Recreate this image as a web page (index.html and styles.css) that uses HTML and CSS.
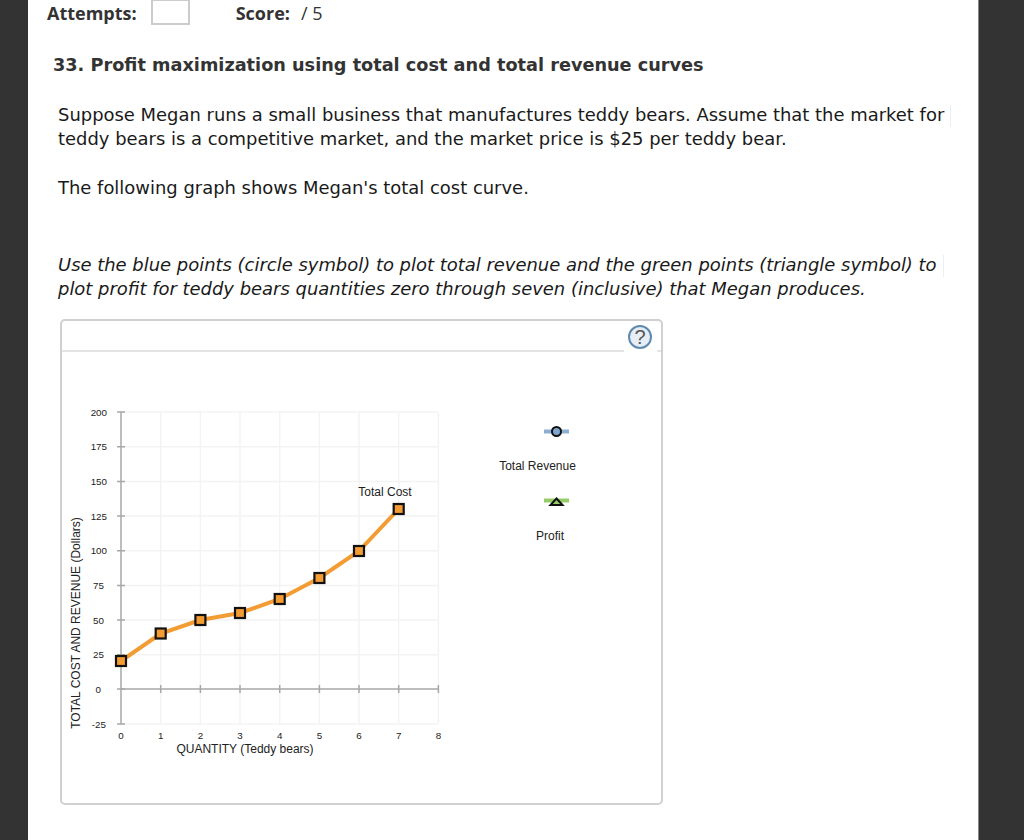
FILE: index.html
```html
<!DOCTYPE html>
<html lang="en">
<head>
<meta charset="utf-8">
<title>Profit maximization</title>
<link rel="stylesheet" href="styles.css">
</head>
<body>
<main class="page">
  <div class="attempts">
    <span class="label">Attempts:</span>
    <span class="box"></span>
    <span class="label score">Score:</span>
    <span class="points">/ 5</span>
  </div>
  <h1 class="title">33. Profit maximization using total cost and total revenue curves</h1>
  <p class="para first">Suppose Megan runs a small business that manufactures teddy bears. Assume that the market for<span class="caret"></span><br>teddy bears is a competitive market, and the market price is $25 per teddy bear.</p>
  <p class="para single">The following graph shows Megan's total cost curve.</p>
  <p class="para instr">Use the blue points (circle symbol) to plot total revenue and the green points (triangle symbol) to<span class="caret"></span><br>plot profit for teddy bears quantities zero through seven (inclusive) that Megan produces.</p>
  <section class="panel">
    <div class="panel-head">
      <div class="help-wrap"><span class="help">?</span></div>
    </div>
    <svg class="chart" width="603" height="454" viewBox="60 351 603 454" xmlns="http://www.w3.org/2000/svg">
      <g class="grid">
        <path d="M160.700 412V724M200.400 412V724M240 412V724M279.700 412V724M319.400 412V724M359 412V724M398.700 412V724M438.400 412V724"/>
        <path d="M121 412H438M121 446.700H438M121 481.400H438M121 516H438M121 550.700H438M121 585.400H438M121 620H438M121 654.700H438M121 724H438"/>
      </g>
      <g class="axis">
        <path d="M121 412V724M121 689H438.400"/>
        <path d="M117 412H125M117 446.700H125M117 481.400H125M117 516H125M117 550.700H125M117 585.400H125M117 620H125M117 654.700H125M117 689H125M117 724H125"/>
        <path d="M160.700 685V693M200.400 685V693M240 685V693M279.700 685V693M319.400 685V693M359 685V693M398.700 685V693M438.400 685V693"/>
      </g>
      <g class="ticks-y">
        <text x="107" y="415.500">200</text>
        <text x="107" y="450.200">175</text>
        <text x="107" y="485">150</text>
        <text x="107" y="519.500">125</text>
        <text x="107" y="554.200">100</text>
        <text x="104" y="589">75</text>
        <text x="104" y="623.500">50</text>
        <text x="104" y="658.200">25</text>
        <text x="101" y="692.500">0</text>
        <text x="106" y="728">-25</text>
      </g>
      <g class="ticks-x">
        <text x="121" y="739">0</text>
        <text x="160.700" y="739">1</text>
        <text x="200.400" y="739">2</text>
        <text x="240" y="739">3</text>
        <text x="279.700" y="739">4</text>
        <text x="319.400" y="739">5</text>
        <text x="359" y="739">6</text>
        <text x="398.700" y="739">7</text>
        <text x="438.400" y="739">8</text>
      </g>
      <text class="axis-title" x="245" y="752.500">QUANTITY (Teddy bears)</text>
      <text class="axis-title" transform="translate(80 623) rotate(-90)">TOTAL COST AND REVENUE (Dollars)</text>
      <polyline class="curve" points="121,661 160.700,633.500 200.400,620 240,613 279.700,599 319.400,578 359,551 398.700,509"/>
      <g class="marker">
        <rect x="116" y="656" width="10" height="10"/>
        <rect x="155.700" y="628.500" width="10" height="10"/>
        <rect x="195.400" y="615" width="10" height="10"/>
        <rect x="235" y="608" width="10" height="10"/>
        <rect x="274.700" y="594" width="10" height="10"/>
        <rect x="314.400" y="573" width="10" height="10"/>
        <rect x="354" y="546" width="10" height="10"/>
        <rect x="393.700" y="504" width="10" height="10"/>
      </g>
      <text class="label-text" x="385" y="496">Total Cost</text>
      <path class="leg-blue" d="M544 431.500H569"/>
      <circle class="leg-circle" cx="556.500" cy="431.500" r="4.500"/>
      <text class="label-text" x="537.500" y="470">Total Revenue</text>
      <path class="leg-green" d="M544 500.500H569"/>
      <path class="leg-tri" d="M556.500 498.500L562.500 505H550.500Z"/>
      <text class="label-text" x="550" y="540">Profit</text>
    </svg>
  </section>
</main>
</body>
</html>
```
FILE: styles.css
```css
html, body {
  margin: 0;
  padding: 0;
  height: 840px;
  overflow: hidden;
  background: #333333;
}
.page {
  box-sizing: border-box;
  width: 951px;
  height: 840px;
  margin-left: 28px;
  background: #ffffff;
  border-right: 1px solid #888888;
  padding-left: 19px;
  color: #222222;
  font-family: "DejaVu Sans", Verdana, sans-serif;
  overflow: hidden;
}
.attempts {
  display: flex;
  align-items: center;
  height: 25px;
  font-family: "Open Sans", sans-serif;
  font-size: 18px;
  color: #333333;
}
.label {
  font-weight: 700;
}
.box {
  box-sizing: border-box;
  width: 39px;
  height: 26px;
  margin-left: 14px;
  margin-top: -1px;
  border: 2px solid #cccccc;
}
.score {
  margin-left: 46px;
}
.points {
  margin-left: 11px;
}
.title {
  margin: 28px 0 0 6px;
  font-size: 17.700px;
  line-height: 24px;
  font-weight: 700;
  color: #333333;
}
.para {
  margin: 0 0 0 11px;
  font-size: 17.950px;
  line-height: 24px;
  color: #1a1a1a;
}
.first { margin-top: 26px; }
.single { margin-top: 25px; }
.instr { margin-top: 53px; font-style: italic; }
.caret {
  display: inline-block;
  width: 1px;
  height: 22px;
  margin-left: 6px;
  vertical-align: -6px;
  background: #e8f0f7;
}
.panel {
  box-sizing: border-box;
  width: 603px;
  height: 486px;
  margin: 18px 0 0 13px;
  border: 2px solid #d0d0d0;
  border-radius: 5px;
  background: #ffffff;
}
.panel-head {
  display: flex;
  justify-content: flex-end;
  align-items: flex-start;
  box-sizing: border-box;
  height: 31px;
  padding-right: 4px;
  border-bottom: 2px solid #e4e4e4;
}
.help-wrap {
  box-sizing: border-box;
  height: 31px;
  padding: 4px 5px 0 4px;
  background: #ffffff;
}
.help {
  display: block;
  box-sizing: border-box;
  width: 24px;
  height: 24px;
  border: 2px solid #5f8ab0;
  border-radius: 50%;
  background: #e6edf4;
  color: #555555;
  font-family: "Liberation Sans", sans-serif;
  font-size: 20px;
  line-height: 20px;
  text-align: center;
}
.chart {
  display: block;
  margin: -1px 0 0 -2px;
  font-family: "Liberation Sans", Arial, sans-serif;
}
.grid path {
  fill: none;
  stroke: #f3f3f3;
  stroke-width: 1.500;
}
.axis path {
  fill: none;
  stroke: #a8a8a8;
  stroke-width: 1.500;
}
.ticks-y text {
  font-size: 9.800px;
  text-anchor: end;
  fill: #222222;
}
.ticks-x text {
  font-size: 9.800px;
  text-anchor: middle;
  fill: #222222;
}
.axis-title {
  font-size: 12px;
  text-anchor: middle;
  fill: #222222;
}
.label-text {
  font-size: 12px;
  text-anchor: middle;
  fill: #222222;
}
.curve {
  fill: none;
  stroke: #f49c34;
  stroke-width: 4;
}
.marker rect {
  fill: #f49c34;
  stroke: #111111;
  stroke-width: 2.200;
}
.leg-blue {
  fill: none;
  stroke: #8caed3;
  stroke-width: 4;
}
.leg-green {
  fill: none;
  stroke: #96cc68;
  stroke-width: 4;
}
.leg-circle {
  fill: #7fa6cf;
  stroke: #111111;
  stroke-width: 2;
}
.leg-tri {
  fill: #96cc68;
  stroke: #111111;
  stroke-width: 2;
}
```
